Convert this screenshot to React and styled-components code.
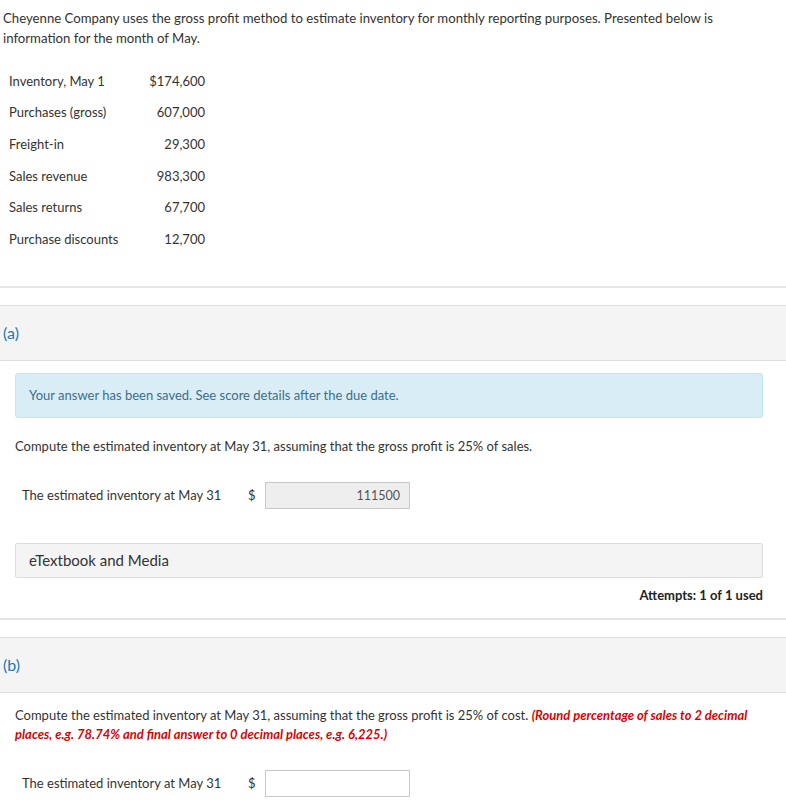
import styled, { createGlobalStyle } from "styled-components";

const GlobalStyle = createGlobalStyle`
  body {
    margin: 0;
    background: #fff;
    font-family: Lato, "Open Sans", Arial, sans-serif;
    color: #333;
  }
`;

const Page = styled.div`
  display: flex;
  flex-direction: column;
  width: 786px;
`;

const Question = styled.p`
  margin: 0;
  padding: 8px 60px 0 3px;
  font-size: 13.2px;
  line-height: 20px;
`;

const DataTable = styled.div`
  display: grid;
  grid-template-columns: 130px 66px;
  grid-auto-rows: 31.6px;
  align-items: center;
  margin: 17px 0 0 9px;
  font-size: 13px;
`;

const Cell = styled.div`
  text-align: ${(p) => (p.$num ? "right" : "left")};
`;

const Divider = styled.div`
  height: 2px;
  background: #e4e4e4;
  margin-top: ${(p) => p.$top}px;
`;

const PartHeader = styled.div`
  display: flex;
  align-items: center;
  height: 54px;
  margin-top: 17px;
  padding-left: 3px;
  background: #f4f4f4;
  border-top: 1px solid #dedede;
  border-bottom: 1px solid #dedede;
  color: #1a7ab6;
  font-size: 16px;
`;

const PartBody = styled.div`
  display: flex;
  flex-direction: column;
  padding: 0 23px 0 15px;
`;

const Notice = styled.div`
  display: flex;
  align-items: center;
  height: 43px;
  margin-top: 12px;
  padding-left: 13px;
  background: #d9edf7;
  border: 1px solid #bce8f1;
  border-radius: 3px;
  color: #3b6f8b;
  font-size: 13px;
`;

const Prompt = styled.p`
  margin: ${(p) => p.$top}px 0 0;
  font-size: 13px;
  line-height: ${(p) => p.$lh || 20}px;
`;

const Hint = styled.span`
  color: #e00000;
  font-weight: 700;
  font-style: italic;
`;

const AnswerRow = styled.div`
  display: flex;
  align-items: center;
  margin-top: 26px;
  padding-left: 7px;
  font-size: 13px;
`;

const AnswerLabel = styled.span`
  width: 226px;
`;

const Dollar = styled.span`
  width: 17px;
`;

const AnswerInput = styled.input`
  box-sizing: border-box;
  width: 145px;
  height: 27px;
  padding: 0 9px;
  border: 1px solid #c8c8c8;
  background: ${(p) => (p.disabled ? "#eeeeee" : "#fff")};
  color: #555;
  font-family: inherit;
  font-size: 12.5px;
  text-align: right;
  outline: none;
`;

const Resource = styled.div`
  display: flex;
  align-items: center;
  height: 33px;
  margin-top: 34px;
  padding-left: 13px;
  background: #f4f4f4;
  border: 1px solid #dcdcdc;
  border-radius: 2px;
  font-size: 15px;
  color: #333;
`;

const Attempts = styled.div`
  margin-top: 7px;
  text-align: right;
  font-size: 13px;
  font-weight: 700;
  line-height: 20px;
  color: #222;
`;

const rows = [
  ["Inventory, May 1", "$174,600"],
  ["Purchases (gross)", "607,000"],
  ["Freight-in", "29,300"],
  ["Sales revenue", "983,300"],
  ["Sales returns", "67,700"],
  ["Purchase discounts", "12,700"],
];

export default function App() {
  return (
    <Page>
      <GlobalStyle />
      <Question>
        Cheyenne Company uses the gross profit method to estimate inventory for monthly
        reporting purposes. Presented below is information for the month of May.
      </Question>
      <DataTable>
        {rows.flatMap(([label, value]) => [
          <Cell key={label}>{label}</Cell>,
          <Cell key={label + "v"} $num>
            {value}
          </Cell>,
        ])}
      </DataTable>

      <Divider $top={31} />
      <PartHeader>(a)</PartHeader>
      <PartBody>
        <Notice>Your answer has been saved. See score details after the due date.</Notice>
        <Prompt $top={18}>
          Compute the estimated inventory at May 31, assuming that the gross profit is 25% of
          sales.
        </Prompt>
        <AnswerRow>
          <AnswerLabel>The estimated inventory at May 31</AnswerLabel>
          <Dollar>$</Dollar>
          <AnswerInput disabled value="111500" readOnly />
        </AnswerRow>
        <Resource>eTextbook and Media</Resource>
        <Attempts>Attempts: 1 of 1 used</Attempts>
      </PartBody>

      <Divider $top={13} />
      <PartHeader>(b)</PartHeader>
      <PartBody>
        <Prompt $top={13} $lh={19}>
          Compute the estimated inventory at May 31, assuming that the gross profit is 25% of
          cost.{" "}
          <Hint>
            (Round percentage of sales to 2 decimal places, e.g. 78.74% and final answer to 0
            decimal places, e.g. 6,225.)
          </Hint>
        </Prompt>
        <AnswerRow>
          <AnswerLabel>The estimated inventory at May 31</AnswerLabel>
          <Dollar>$</Dollar>
          <AnswerInput />
        </AnswerRow>
      </PartBody>
    </Page>
  );
}
